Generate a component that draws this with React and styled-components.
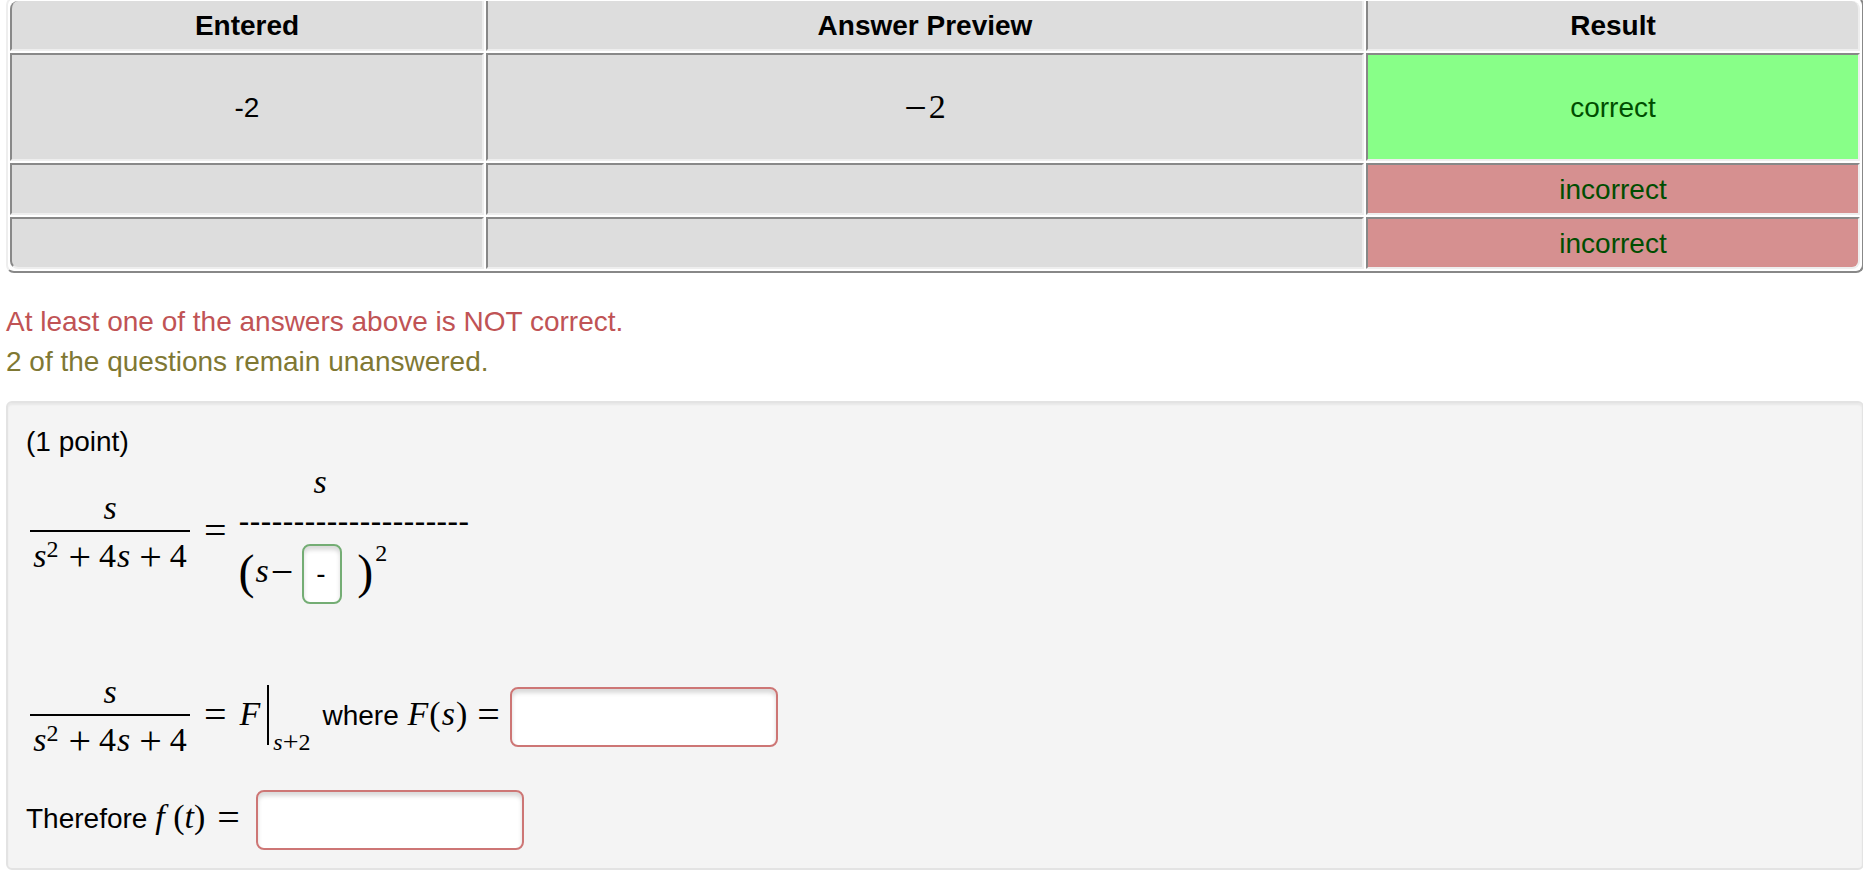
import React from 'react';
import styled, { createGlobalStyle } from 'styled-components';

const SANS = '"Helvetica Neue", "Liberation Sans", Arial, sans-serif';
const SERIF = '"Liberation Serif", "Times New Roman", serif';

const LIGHT_EDGE = '#eeeeee';
const DARK_EDGE = '#888888';

const GlobalStyle = createGlobalStyle`
  * {
    box-sizing: border-box;
  }
  body {
    margin: 0;
    background: #fff;
    color: #000;
    font-family: ${SANS};
    font-size: 28px;
    line-height: 40px;
    overflow-x: hidden;
  }
`;

const Page = styled.main`
  margin: -3px -1px 0 0;
  padding-left: 6px;
`;

const ResultsTable = styled.table`
  width: 100%;
  table-layout: fixed;
  border-collapse: separate;
  border-spacing: 2px;
  border: 2px solid;
  border-color: ${LIGHT_EDGE} ${DARK_EDGE} ${DARK_EDGE} ${LIGHT_EDGE};
  border-radius: 8px;
  text-align: center;
`;

const Column = styled.col`
  width: ${(props) => props.$width};
`;

const HeadCell = styled.th`
  height: 50px;
  padding: 2px 0 0;
  background: #ddd;
  border: 2px solid;
  border-color: ${DARK_EDGE} ${LIGHT_EDGE} ${LIGHT_EDGE} ${DARK_EDGE};
  border-top: 0;
  font-weight: bold;
  &:first-child {
    border-top-left-radius: 8px;
  }
  &:last-child {
    border-top-right-radius: 8px;
  }
`;

const resultColors = {
  correct: '#88ff88',
  incorrect: '#d69090',
};

const Cell = styled.td`
  height: ${(props) => (props.$tall ? '108px' : '52px')};
  padding: 2px 0 0;
  background: ${(props) => resultColors[props.$result] || '#ddd'};
  color: ${(props) => (props.$result ? '#004d00' : '#000')};
  border: 2px solid;
  border-color: ${DARK_EDGE} ${LIGHT_EDGE} ${LIGHT_EDGE} ${DARK_EDGE};
  tr:last-child > &:first-child {
    border-bottom-left-radius: 8px;
  }
  tr:last-child > &:last-child {
    border-bottom-right-radius: 8px;
  }
`;

const Messages = styled.div`
  margin: 29px 0 19px;
`;

const Message = styled.p`
  margin: 0;
  color: ${(props) => (props.$warning ? '#7f7833' : '#c05355')};
`;

const Problem = styled.form`
  padding: 19px 18px 18px;
  background: #f4f4f4;
  border: 2px solid #e3e3e3;
  border-radius: 6px;
  box-shadow: inset 0 2px 2px rgba(0, 0, 0, 0.05);
`;

const Points = styled.p`
  margin: 0;
`;

const Equation = styled.div`
  display: flex;
  align-items: center;
  margin-top: ${(props) => props.$space || '0'};
`;

const Phrase = styled.label`
  padding-bottom: 4px;
  white-space: pre;
`;

const MathText = styled.span`
  font-family: ${SERIF};
  font-size: 34px;
  line-height: 40px;
`;

const Variable = styled.i`
  margin: 0 1px;
`;

const Operator = styled.span`
  margin: ${(props) => props.$space || '0 8px'};
  font-family: ${SERIF};
  font-size: ${(props) => (props.$small ? '28px' : '40px')};
  line-height: 24px;
  vertical-align: ${(props) => (props.$small ? '-1px' : '-3px')};
`;

const Sup = styled.sup`
  padding-right: 2px;
  font-size: 24px;
  line-height: 0;
  vertical-align: 10px;
`;

const FractionBox = styled.div`
  min-width: 160px;
  margin: 0 4px;
  padding-bottom: 2px;
  text-align: center;
  font-family: ${SERIF};
  font-size: 34px;
  line-height: 40px;
`;

const Numerator = styled.div`
  padding-bottom: 2px;
`;

const Denominator = styled.div`
  padding-top: 4px;
  border-top: 2px solid #000;
`;

const WideFraction = styled.div`
  display: flex;
  flex-direction: column;
`;

const WideNumerator = styled.div`
  padding-left: 74px;
  font-family: ${SERIF};
  font-size: 34px;
`;

const Dashes = styled.div`
  font-size: 33px;
`;

const Group = styled.div`
  display: flex;
  align-items: center;
  margin-top: 2px;
`;

const Paren = styled.span`
  padding-bottom: 4px;
  font-family: ${SERIF};
  font-size: 48px;
  line-height: 48px;
`;

const Power = styled.span`
  align-self: flex-start;
  padding-left: 2px;
  font-family: ${SERIF};
  font-size: 24px;
  line-height: 18px;
`;

const EvaluationBar = styled.span`
  height: 60px;
  margin: 8px 4px 12px 6px;
  border-left: 2px solid #000;
`;

const Subscript = styled.span`
  align-self: flex-end;
  padding-right: 12px;
  font-family: ${SERIF};
  font-size: 24px;
  line-height: 30px;
`;

const Evaluation = styled.div`
  display: flex;
  align-items: center;
`;

const AnswerInput = styled.input`
  width: ${(props) => (props.$short ? '40px' : '268px')};
  height: 60px;
  margin: ${(props) => (props.$short ? '0 15px 0 9px' : '0')};
  padding: 8px 12px;
  background: #fff;
  border: 2px solid ${(props) => (props.$correct ? '#74ad74' : '#cd7675')};
  border-radius: 8px;
  box-shadow: inset 0 4px 4px rgba(0, 0, 0, 0.15);
  color: #000;
  font-family: ${SANS};
  font-size: 28px;
  line-height: 40px;
  outline: none;
`;

const answers = [
  { entered: '-2', preview: '2', result: 'correct' },
  { entered: '', preview: '', result: 'incorrect' },
  { entered: '', preview: '', result: 'incorrect' },
];

const Fraction = () => (
  <FractionBox>
    <Numerator><i>s</i></Numerator>
    <Denominator>
      <i>s</i>
      <Sup>2</Sup>
      <Operator>+</Operator>
      4
      <Variable>s</Variable>
      <Operator>+</Operator>
      4
    </Denominator>
  </FractionBox>
);

const Results = () => (
  <ResultsTable>
    <colgroup>
      <Column $width="474px" />
      <Column />
      <Column $width="494px" />
    </colgroup>
    <thead>
      <tr>
        <HeadCell>Entered</HeadCell>
        <HeadCell>Answer Preview</HeadCell>
        <HeadCell>Result</HeadCell>
      </tr>
    </thead>
    <tbody>
      {answers.map(({ entered, preview, result }, index) => (
        <tr key={index}>
          <Cell $tall={entered}>{entered}</Cell>
          <Cell>
            {preview && (
              <MathText>
                <Operator $space="0 2px 0 0">−</Operator>
                {preview}
              </MathText>
            )}
          </Cell>
          <Cell $result={result}>{result}</Cell>
        </tr>
      ))}
    </tbody>
  </ResultsTable>
);

const App = () => (
  <>
    <GlobalStyle />
    <Page>
      <Results />
      <Messages>
        <Message>At least one of the answers above is NOT correct.</Message>
        <Message $warning>2 of the questions remain unanswered.</Message>
      </Messages>
      <Problem>
        <Points>(1 point)</Points>
        <Equation>
          <Fraction />
          <Phrase as="span">
            <MathText><Operator $space="0 12px 0 10px">=</Operator></MathText>
          </Phrase>
          <WideFraction>
            <WideNumerator><Variable>s</Variable></WideNumerator>
            <Dashes>{'-'.repeat(21)}</Dashes>
            <Group>
              <Paren>(</Paren>
              <Phrase htmlFor="shift">
                <MathText><Variable>s</Variable></MathText>
                <Operator $space="0 0 0 1px">−</Operator>
              </Phrase>
              <AnswerInput id="shift" $short $correct defaultValue="-" />
              <Paren>)</Paren>
              <Power>2</Power>
            </Group>
          </WideFraction>
        </Equation>
        <Equation $space="68px">
          <Fraction />
          <Phrase as="span">
            <MathText>
              <Operator $space="0 12px 0 10px">=</Operator>
              <Variable>F</Variable>
            </MathText>
          </Phrase>
          <Evaluation>
            <EvaluationBar />
            <Subscript>
              <i>s</i>
              <Operator $small $space="0">+</Operator>
              2
            </Subscript>
          </Evaluation>
          <Phrase htmlFor="transform">
            {'where '}
            <MathText>
              <Variable>F</Variable>
              (
              <Variable>s</Variable>
              )
            </MathText>
            <Operator $space="0 10px">=</Operator>
          </Phrase>
          <AnswerInput id="transform" />
        </Equation>
        <Equation $space="28px">
          <Phrase htmlFor="inverse">
            {'Therefore '}
            <MathText>
              <i>f</i>
              {' ('}
              <i>t</i>
              )
            </MathText>
            <Operator $space="0 16px 0 12px">=</Operator>
          </Phrase>
          <AnswerInput id="inverse" />
        </Equation>
      </Problem>
    </Page>
  </>
);

export default App;
